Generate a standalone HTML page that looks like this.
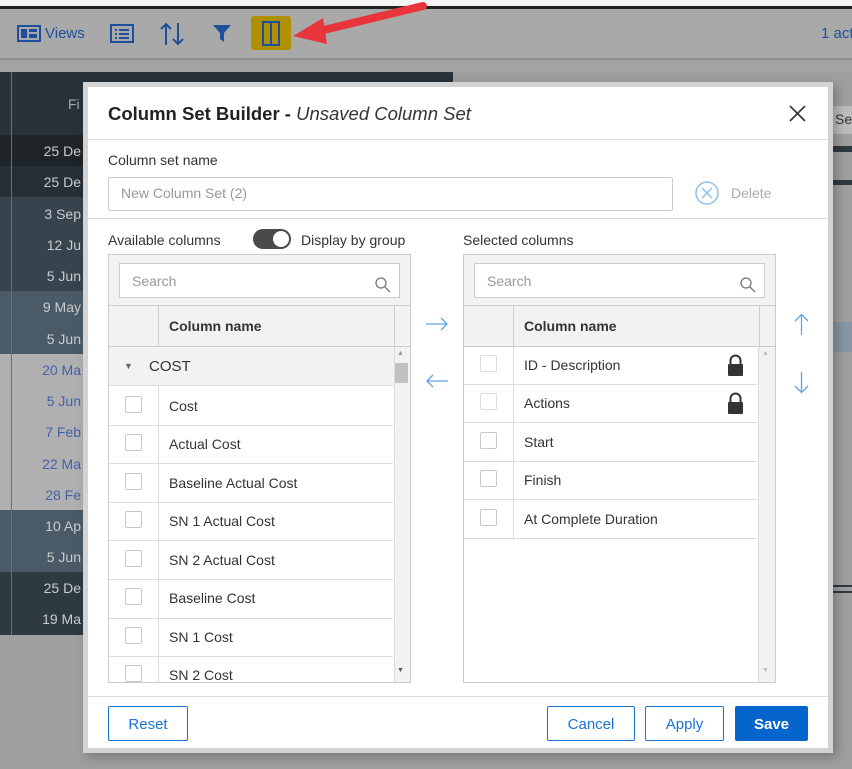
<!DOCTYPE html>
<html><head><meta charset="utf-8">
<style>
*{box-sizing:border-box;margin:0;padding:0}
body{width:852px;height:769px;position:relative;overflow:hidden;background:#9f9f9f;font-family:"Liberation Sans",Arial,sans-serif;color:#333}
.a{position:absolute}
.t{position:absolute;white-space:nowrap}
.row{position:absolute;left:0;width:83px}
.d{position:absolute;right:2px;font-size:14px;color:#c9ccce}
.cb{position:absolute;width:17px;height:17px;border:1px solid #c8c8c8;border-radius:2px;background:#fff}
.btn{position:absolute;border:1px solid #1a73d0;border-radius:2px;color:#1a73d0;font-size:15px;text-align:center;line-height:36px;background:#fff}
</style></head><body>
<div class="a" style="left:0;top:0;width:852px;height:6px;background:#f4f4f4"></div>
<div class="a" style="left:0;top:6px;width:852px;height:3px;background:#222"></div>
<div class="a" style="left:0;top:9px;width:852px;height:49px;background:#a9a9a9"></div>
<div class="a" style="left:0;top:58px;width:852px;height:2px;background:#8f8f8f"></div>
<div class="a" style="left:0;top:60px;width:852px;height:12px;background:#a3a3a3"></div>
<svg class="a" style="left:17px;top:25px" width="24" height="17"><rect x="1" y="1" width="22" height="15" fill="none" stroke="#1d4f9c" stroke-width="2"/><rect x="4" y="4" width="6" height="9" fill="#1d4f9c"/><rect x="12" y="4" width="8" height="3" fill="#1d4f9c"/><rect x="12" y="9" width="8" height="4" fill="#1d4f9c"/></svg>
<div class="t" style="left:45px;top:25px;font-size:15px;color:#1d4f9c">Views</div>
<svg class="a" style="left:110px;top:24px" width="24" height="19"><rect x="1" y="1" width="22" height="17" fill="none" stroke="#1d4f9c" stroke-width="2"/><path d="M5 6h2M5 10h2M5 14h2M9 6h10M9 10h10M9 14h10" stroke="#1d4f9c" stroke-width="2"/></svg>
<svg class="a" style="left:159px;top:21px" width="26" height="26"><path d="M7 24V3M2 8l5-5 5 5M19 2v21M14 18l5 5 5-5" fill="none" stroke="#1d4f9c" stroke-width="2"/></svg>
<svg class="a" style="left:212px;top:24px" width="20" height="19"><path d="M1 1h18l-7 8v9l-4-3V9z" fill="#1d4f9c"/></svg>
<div class="a" style="left:251px;top:16px;width:40px;height:34px;background:#b08f00;border-radius:3px"></div>
<svg class="a" style="left:262px;top:21px" width="18" height="25"><rect x="1" y="1" width="16" height="23" fill="none" stroke="#1d4f9c" stroke-width="2"/><path d="M9 1v23" stroke="#1d4f9c" stroke-width="2"/></svg>
<svg class="a" style="left:285px;top:0" width="145" height="50"><path d="M138 6L22 34" stroke="#e8353c" stroke-width="8" stroke-linecap="round"/><path d="M8 36L38 18L42 44Z" fill="#e8353c"/></svg>
<div class="t" style="left:821px;top:25px;font-size:15px;color:#1d4f9c">1 act</div>
<div class="a" style="left:0;top:72px;width:280px;height:63px;background:#283239"></div>
<div class="a" style="left:280px;top:72px;width:173px;height:10px;background:#283239"></div>
<div class="t" style="left:68px;top:96px;font-size:14px;color:#aaa">Fi</div>
<div class="row" style="top:135px;height:31px;background:#1f2428"><span class="d" style="top:8px">25 De</span></div>
<div class="row" style="top:166px;height:31px;background:#262f35"><span class="d" style="top:8px">25 De</span></div>
<div class="row" style="top:197px;height:94px;background:#37444d"><span class="d" style="top:9px">3 Sep</span><span class="d" style="top:40px">12 Ju</span><span class="d" style="top:71px">5 Jun</span></div>
<div class="row" style="top:291px;height:63px;background:#4a5b67"><span class="d" style="top:8px">9 May</span><span class="d" style="top:40px">5 Jun</span></div>
<div class="row" style="top:354px;height:156px;background:#b0b0b0"><span class="d" style="top:8px;color:#4461a8">20 Ma</span><span class="d" style="top:39px;color:#4461a8">5 Jun</span><span class="d" style="top:70px;color:#4461a8">7 Feb</span><span class="d" style="top:102px;color:#4461a8">22 Ma</span><span class="d" style="top:133px;color:#4461a8">28 Fe</span></div>
<div class="row" style="top:510px;height:62px;background:#4a5b67"><span class="d" style="top:8px">10 Ap</span><span class="d" style="top:39px">5 Jun</span></div>
<div class="row" style="top:572px;height:63px;background:#2e3a42"><span class="d" style="top:8px">25 De</span><span class="d" style="top:39px">19 Ma</span></div>
<div class="a" style="left:11px;top:72px;width:1px;height:563px;background:#6f6f6f"></div>
<div class="a" style="left:833px;top:106px;width:19px;height:28px;background:#bdbdbd"></div>
<div class="t" style="left:835px;top:111px;font-size:14px;color:#333">Se</div>
<div class="a" style="left:833px;top:146px;width:19px;height:6px;background:#2e3a42"></div>
<div class="a" style="left:833px;top:180px;width:19px;height:5px;background:#2e3a42"></div>
<div class="a" style="left:833px;top:322px;width:19px;height:30px;background:#8896a5"></div>
<div class="a" style="left:833px;top:585px;width:19px;height:2px;background:#2e3a42"></div>
<div class="a" style="left:833px;top:591px;width:19px;height:2px;background:#2e3a42"></div>
<div class="a" style="left:83px;top:82px;width:750px;height:671px;background:#d3d3d3;box-shadow:4px 4px 10px rgba(0,0,0,.25)"></div>
<div class="a" style="left:88px;top:87px;width:740px;height:661px;background:#fff"></div>
<div class="t" style="left:108px;top:103px;font-size:18.5px;font-weight:bold;color:#222">Column Set Builder - <span style="font-weight:normal;font-style:italic;color:#333">Unsaved Column Set</span></div>
<svg class="a" style="left:789px;top:105px" width="17" height="17"><path d="M1 1l15 15M16 1L1 16" stroke="#333" stroke-width="1.6"/></svg>
<div class="a" style="left:88px;top:139px;width:740px;height:1px;background:#ddd"></div>
<div class="t" style="left:108px;top:152px;font-size:14px;color:#333">Column set name</div>
<div class="a" style="left:108px;top:177px;width:565px;height:34px;border:1px solid #ccc;border-radius:2px"></div>
<div class="t" style="left:121px;top:185px;font-size:14px;color:#999">New Column Set (2)</div>
<svg class="a" style="left:695px;top:181px" width="24" height="24"><circle cx="12" cy="12" r="11" fill="none" stroke="#8fc0ee" stroke-width="1.5"/><path d="M7 7l10 10M17 7L7 17" stroke="#8fc0ee" stroke-width="1.5"/></svg>
<div class="t" style="left:731px;top:185px;font-size:14px;color:#aaa">Delete</div>
<div class="a" style="left:88px;top:218px;width:740px;height:1px;background:#ddd"></div>
<div class="t" style="left:108px;top:232px;font-size:14px;color:#333">Available columns</div>
<div class="a" style="left:253px;top:229px;width:38px;height:20px;border-radius:10px;background:#4a4a4a"></div>
<div class="a" style="left:273px;top:231px;width:16px;height:16px;border-radius:8px;background:#fff"></div>
<div class="t" style="left:301px;top:232px;font-size:14px;color:#333">Display by group</div>
<div class="t" style="left:463px;top:232px;font-size:14px;color:#333">Selected columns</div>
<div class="a" style="left:108px;top:254px;width:303px;height:429px;border:1px solid #ccc;background:#f2f2f2;overflow:hidden">
  <div class="a" style="left:10px;top:8px;width:281px;height:35px;border:1px solid #ccc;background:#fff"></div>
  <div class="t" style="left:23px;top:18px;font-size:14px;color:#999">Search</div>
  <svg class="a" style="left:266px;top:22px" width="16" height="16"><circle cx="6" cy="6" r="5" fill="none" stroke="#777" stroke-width="1.3"/><path d="M10 10l5 5" stroke="#777" stroke-width="1.3"/></svg>
  <div class="a" style="left:0;top:50px;width:301px;height:1px;background:#ccc"></div>
  <div class="a" style="left:49px;top:50px;width:1px;height:41px;background:#ccc"></div>
  <div class="a" style="left:285px;top:50px;width:1px;height:41px;background:#ccc"></div>
  <div class="t" style="left:60px;top:63px;font-size:14px;font-weight:bold;color:#333">Column name</div>
  <div class="a" style="left:0;top:91px;width:301px;height:1px;background:#ccc"></div>
  <div class="t" style="left:15px;top:106px;font-size:9px;color:#666">▼</div>
  <div class="t" style="left:40px;top:103px;font-size:15px;color:#333">COST</div>
  <div class="a" style="left:0;top:131px;width:285px;height:300px;background:#fff"></div>
  <div class="a" style="left:49px;top:131px;width:1px;height:300px;background:#ddd"></div>
  <div class="a" style="left:285px;top:91px;width:1px;height:340px;background:#ddd"></div>
  <div class="a" style="left:286px;top:108px;width:13px;height:20px;background:#c1c1c1"></div>
  <div class="t" style="left:288px;top:95px;font-size:7px;color:#999">▲</div>
  <div class="t" style="left:288px;top:412px;font-size:7px;color:#555">▼</div>
</div>
<div class="a" style="left:109px;top:385px;width:284px;height:1px;background:#ddd"></div>
<div class="cb" style="left:125px;top:396px"></div><div class="t" style="left:169px;top:398px;font-size:14px">Cost</div>
<div class="a" style="left:109px;top:425px;width:284px;height:1px;background:#ddd"></div>
<div class="cb" style="left:125px;top:434px"></div><div class="t" style="left:169px;top:436px;font-size:14px">Actual Cost</div>
<div class="a" style="left:109px;top:463px;width:284px;height:1px;background:#ddd"></div>
<div class="cb" style="left:125px;top:473px"></div><div class="t" style="left:169px;top:475px;font-size:14px">Baseline Actual Cost</div>
<div class="a" style="left:109px;top:502px;width:284px;height:1px;background:#ddd"></div>
<div class="cb" style="left:125px;top:511px"></div><div class="t" style="left:169px;top:513px;font-size:14px">SN 1 Actual Cost</div>
<div class="a" style="left:109px;top:540px;width:284px;height:1px;background:#ddd"></div>
<div class="cb" style="left:125px;top:550px"></div><div class="t" style="left:169px;top:552px;font-size:14px">SN 2 Actual Cost</div>
<div class="a" style="left:109px;top:579px;width:284px;height:1px;background:#ddd"></div>
<div class="cb" style="left:125px;top:588px"></div><div class="t" style="left:169px;top:590px;font-size:14px">Baseline Cost</div>
<div class="a" style="left:109px;top:618px;width:284px;height:1px;background:#ddd"></div>
<div class="cb" style="left:125px;top:627px"></div><div class="t" style="left:169px;top:629px;font-size:14px">SN 1 Cost</div>
<div class="a" style="left:109px;top:656px;width:284px;height:1px;background:#ddd"></div>
<div class="a" style="left:109px;top:657px;width:284px;height:25px;overflow:hidden"><div class="cb" style="left:16px;top:8px"></div><div class="t" style="left:60px;top:10px;font-size:14px">SN 2 Cost</div></div>
<svg class="a" style="left:425px;top:317px" width="24" height="14"><path d="M1 7h21M16 1l6 6-6 6" fill="none" stroke="#5ea3e8" stroke-width="1.3"/></svg>
<svg class="a" style="left:425px;top:374px" width="24" height="14"><path d="M23 7H2M8 1L2 7l6 6" fill="none" stroke="#5ea3e8" stroke-width="1.3"/></svg>
<svg class="a" style="left:794px;top:313px" width="15" height="23"><path d="M7.5 22V2M1 8l6.5-6.5L14 8" fill="none" stroke="#5ea3e8" stroke-width="1.3"/></svg>
<svg class="a" style="left:794px;top:371px" width="15" height="23"><path d="M7.5 1v20M1 15l6.5 6.5L14 15" fill="none" stroke="#5ea3e8" stroke-width="1.3"/></svg>
<div class="a" style="left:463px;top:254px;width:313px;height:429px;border:1px solid #ccc;background:#f2f2f2;overflow:hidden">
  <div class="a" style="left:10px;top:8px;width:291px;height:35px;border:1px solid #ccc;background:#fff"></div>
  <div class="t" style="left:23px;top:18px;font-size:14px;color:#999">Search</div>
  <svg class="a" style="left:276px;top:22px" width="16" height="16"><circle cx="6" cy="6" r="5" fill="none" stroke="#777" stroke-width="1.3"/><path d="M10 10l5 5" stroke="#777" stroke-width="1.3"/></svg>
  <div class="a" style="left:0;top:50px;width:311px;height:1px;background:#ccc"></div>
  <div class="a" style="left:49px;top:50px;width:1px;height:41px;background:#ccc"></div>
  <div class="a" style="left:295px;top:50px;width:1px;height:41px;background:#ccc"></div>
  <div class="t" style="left:60px;top:63px;font-size:14px;font-weight:bold;color:#333">Column name</div>
  <div class="a" style="left:0;top:91px;width:311px;height:1px;background:#ccc"></div>
  <div class="a" style="left:0;top:92px;width:294px;height:340px;background:#fff"></div>
  <div class="a" style="left:49px;top:92px;width:1px;height:193px;background:#ddd"></div>
  <div class="a" style="left:294px;top:92px;width:1px;height:340px;background:#ddd"></div>
  <div class="t" style="left:298px;top:95px;font-size:7px;color:#bbb">▲</div>
  <div class="t" style="left:298px;top:412px;font-size:7px;color:#bbb">▼</div>
</div>
<div class="cb" style="left:480px;top:355px;border-color:#ddd"></div><div class="t" style="left:524px;top:357px;font-size:14px">ID - Description</div>
<svg class="a" style="left:727px;top:354px" width="17" height="22"><path d="M3.5 10V6.5a5 5 0 0 1 10 0V10" fill="none" stroke="#333" stroke-width="2"/><rect x="1" y="10" width="15" height="12" rx="1" fill="#333"/></svg>
<div class="a" style="left:464px;top:384px;width:293px;height:1px;background:#ddd"></div>
<div class="cb" style="left:480px;top:393px;border-color:#ddd"></div><div class="t" style="left:524px;top:395px;font-size:14px">Actions</div>
<svg class="a" style="left:727px;top:392px" width="17" height="22"><path d="M3.5 10V6.5a5 5 0 0 1 10 0V10" fill="none" stroke="#333" stroke-width="2"/><rect x="1" y="10" width="15" height="12" rx="1" fill="#333"/></svg>
<div class="a" style="left:464px;top:422px;width:293px;height:1px;background:#ddd"></div>
<div class="cb" style="left:480px;top:432px"></div><div class="t" style="left:524px;top:434px;font-size:14px">Start</div>
<div class="a" style="left:464px;top:461px;width:293px;height:1px;background:#ddd"></div>
<div class="cb" style="left:480px;top:470px"></div><div class="t" style="left:524px;top:472px;font-size:14px">Finish</div>
<div class="a" style="left:464px;top:499px;width:293px;height:1px;background:#ddd"></div>
<div class="cb" style="left:480px;top:509px"></div><div class="t" style="left:524px;top:511px;font-size:14px">At Complete Duration</div>
<div class="a" style="left:464px;top:538px;width:293px;height:1px;background:#ddd"></div>
<div class="a" style="left:88px;top:696px;width:740px;height:1px;background:#ddd"></div>
<div class="btn" style="left:108px;top:706px;width:80px;height:35px">Reset</div>
<div class="btn" style="left:547px;top:706px;width:88px;height:35px">Cancel</div>
<div class="btn" style="left:645px;top:706px;width:79px;height:35px">Apply</div>
<div class="btn" style="left:735px;top:706px;width:73px;height:35px;background:#0565cc;border-color:#0565cc;color:#fff;font-weight:bold">Save</div>
</body></html>
